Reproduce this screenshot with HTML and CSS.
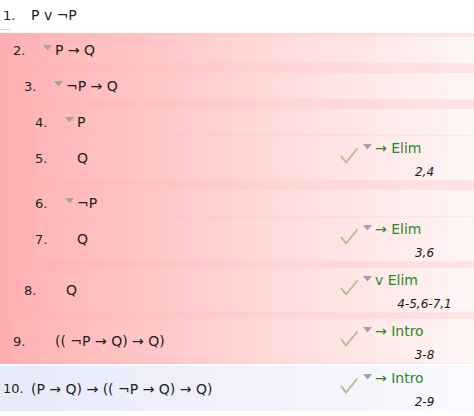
FILE: index.html
```html
<!DOCTYPE html>
<html lang="en">
<head>
<meta charset="utf-8">
<title>Proof</title>
<link rel="stylesheet" href="styles.css">
</head>
<body>
<div class="proof">
  <div class="row top prem"><span class="num">1.</span><span class="f">P v ¬P</span></div>
  <div class="sub">
    <div class="row asm"><span class="num">2.</span><span class="tri"><svg width="9" height="6" viewBox="0 0 9 6"><polygon points="0,0 9,0 4.5,5.5" fill="#a3a3a3"/></svg></span><span class="f">P → Q</span></div>
    <div class="sub">
      <div class="row asm"><span class="num">3.</span><span class="tri"><svg width="9" height="6" viewBox="0 0 9 6"><polygon points="0,0 9,0 4.5,5.5" fill="#a3a3a3"/></svg></span><span class="f">¬P → Q</span></div>
      <div class="sub">
        <div class="row asm"><span class="num">4.</span><span class="tri"><svg width="9" height="6" viewBox="0 0 9 6"><polygon points="0,0 9,0 4.5,5.5" fill="#a3a3a3"/></svg></span><span class="f">P</span></div>
        <div class="row tall"><span class="num">5.</span><span class="tri"></span><span class="f">Q</span>
          <div class="just">
            <svg class="check" width="18" height="16" viewBox="0 0 18 16"><path d="M1.5 8.5 L6 14.5 L17 1" fill="none" stroke="#b3bf8c" stroke-width="1.9" stroke-linecap="round" stroke-linejoin="round"/></svg>
            <span class="rtri"><svg width="9" height="6" viewBox="0 0 9 6"><polygon points="0,0 9,0 4.5,5.5" fill="#a3a3a3"/></svg></span>
            <span class="rule">→ Elim</span>
            <span class="cite">2,4</span>
          </div>
        </div>
      </div>
      <div class="sub">
        <div class="row asm"><span class="num">6.</span><span class="tri"><svg width="9" height="6" viewBox="0 0 9 6"><polygon points="0,0 9,0 4.5,5.5" fill="#a3a3a3"/></svg></span><span class="f">¬P</span></div>
        <div class="row tall"><span class="num">7.</span><span class="tri"></span><span class="f">Q</span>
          <div class="just">
            <svg class="check" width="18" height="16" viewBox="0 0 18 16"><path d="M1.5 8.5 L6 14.5 L17 1" fill="none" stroke="#b3bf8c" stroke-width="1.9" stroke-linecap="round" stroke-linejoin="round"/></svg>
            <span class="rtri"><svg width="9" height="6" viewBox="0 0 9 6"><polygon points="0,0 9,0 4.5,5.5" fill="#a3a3a3"/></svg></span>
            <span class="rule">→ Elim</span>
            <span class="cite">3,6</span>
          </div>
        </div>
      </div>
      <div class="row tall after"><span class="num">8.</span><span class="tri"></span><span class="f">Q</span>
        <div class="just">
          <svg class="check" width="18" height="16" viewBox="0 0 18 16"><path d="M1.5 8.5 L6 14.5 L17 1" fill="none" stroke="#b3bf8c" stroke-width="1.9" stroke-linecap="round" stroke-linejoin="round"/></svg>
          <span class="rtri"><svg width="9" height="6" viewBox="0 0 9 6"><polygon points="0,0 9,0 4.5,5.5" fill="#a3a3a3"/></svg></span>
          <span class="rule">v Elim</span>
          <span class="cite">4-5,6-7,1</span>
        </div>
      </div>
    </div>
    <div class="row tall after"><span class="num">9.</span><span class="tri"></span><span class="f">(( ¬P → Q) → Q)</span>
      <div class="just">
        <svg class="check" width="18" height="16" viewBox="0 0 18 16"><path d="M1.5 8.5 L6 14.5 L17 1" fill="none" stroke="#b3bf8c" stroke-width="1.9" stroke-linecap="round" stroke-linejoin="round"/></svg>
        <span class="rtri"><svg width="9" height="6" viewBox="0 0 9 6"><polygon points="0,0 9,0 4.5,5.5" fill="#a3a3a3"/></svg></span>
        <span class="rule">→ Intro</span>
        <span class="cite">3-8</span>
      </div>
    </div>
  </div>
  <div class="row top tall concl"><span class="num">10.</span><span class="f">(P → Q) → (( ¬P → Q) → Q)</span>
    <div class="just">
      <svg class="check" width="18" height="16" viewBox="0 0 18 16"><path d="M1.5 8.5 L6 14.5 L17 1" fill="none" stroke="#b3bf8c" stroke-width="1.9" stroke-linecap="round" stroke-linejoin="round"/></svg>
      <span class="rtri"><svg width="9" height="6" viewBox="0 0 9 6"><polygon points="0,0 9,0 4.5,5.5" fill="#a3a3a3"/></svg></span>
      <span class="rule">→ Intro</span>
      <span class="cite">2-9</span>
    </div>
  </div>
</div>
</body>
</html>
```

FILE: styles.css
```css
html, body {
  margin: 0;
  padding: 0;
  background: #ffffff;
}

body {
  font-family: "DejaVu Sans", Verdana, sans-serif;
  color: #1e1e1e;
  width: 474px;
  height: 416px;
  overflow: hidden;
}

.proof {
  display: flex;
  flex-direction: column;
}

.sub {
  display: flex;
  flex-direction: column;
  padding: 4px 0 0 11px;
  background: linear-gradient(to right, #ffaeb0 0px, #ffc4c4 160px, #ffd6d6 300px, #ffe4e4 474px);
  background-attachment: fixed;
}

.sub .sub {
  padding-top: 9px;
}

.row {
  box-sizing: border-box;
  display: flex;
  align-items: center;
  height: 27px;
  padding-left: 2px;
  border-bottom: 1px solid rgba(230, 150, 150, 0.1);
  background: linear-gradient(to right, #ffb0b2 0px, #ffc8c8 160px, #ffdede 300px, #fff6f6 474px);
  background-attachment: fixed;
}

.sub > .row {
  border-left: 1px solid rgba(210, 130, 130, 0.09);
  padding-left: 1px;
}

.row.tall {
  height: 45px;
}

.row.after {
  margin-top: 6px;
}

.num {
  width: 30px;
  flex: none;
  font-size: 13px;
}

.tri {
  width: 12px;
  flex: none;
  display: flex;
  align-items: center;
  padding-bottom: 4px;
}

.tri svg, .rtri svg {
  display: block;
}

.f {
  font-size: 14px;
  white-space: pre;
}

.row.top {
  padding-left: 3px;
  border: none;
}

.row.top .num {
  width: 28px;
}

.row.prem {
  height: 33px;
  padding-bottom: 3px;
  background: linear-gradient(#d6d6d6, #d6d6d6) no-repeat 0 29px / 10px 1px, #ffffff;
}

.row.concl {
  margin-top: 2px;
  background: linear-gradient(to right, #e8eaf9 0px, #eff0fb 200px, #f9f9fe 474px);
}

.just {
  margin-left: auto;
  width: 134px;
  flex: none;
  align-self: stretch;
  box-sizing: border-box;
  padding-top: 3px;
  display: grid;
  grid-template-columns: 23px 12px 1fr;
  grid-template-rows: 18px auto;
}

.check {
  grid-column: 1;
  grid-row: 1 / 3;
  margin: 9px 0 0 0;
  display: block;
}

.rtri {
  grid-column: 2;
  grid-row: 1;
  padding-top: 5px;
}

.rule {
  grid-column: 3;
  grid-row: 1;
  font-size: 14px;
  line-height: 18px;
  color: #2a8a2a;
  white-space: pre;
}

.cite {
  grid-column: 3;
  grid-row: 2;
  margin-top: 7px;
  font-size: 12px;
  line-height: 16px;
  font-style: italic;
  text-align: center;
  color: #1a1a1a;
}
```
